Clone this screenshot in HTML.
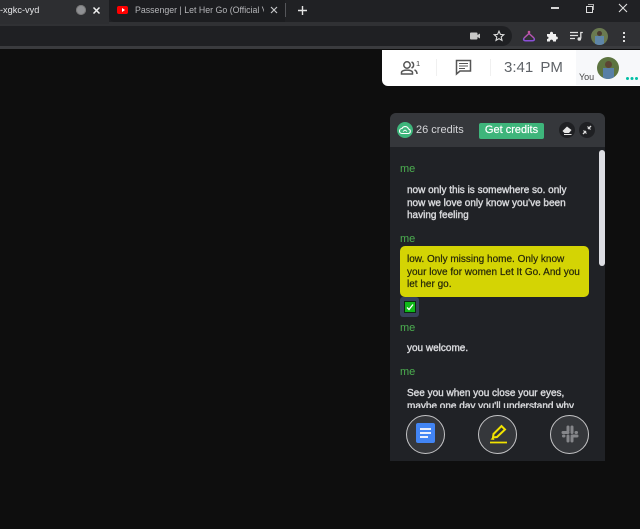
<!DOCTYPE html>
<html><head><meta charset="utf-8">
<style>
html,body{margin:0;padding:0;background:#0e0e0e;}
body{width:640px;height:529px;position:relative;overflow:hidden;font-family:"Liberation Sans",sans-serif;}
#w{position:absolute;left:0;top:0;width:640px;height:529px;filter:blur(.3px);overflow:hidden}
.a{position:absolute;}
.t{position:absolute;white-space:nowrap;}
.msg{position:absolute;left:407px;font-size:10px;line-height:12.600px;color:#d8d9dc;white-space:nowrap;-webkit-text-stroke:.4px #d8d9dc;}
.me{position:absolute;left:400px;font-size:11px;color:#4caf50;line-height:12px;}
.circ{position:absolute;width:37px;height:37px;border:1px solid #c4c4c6;border-radius:50%;background:#35373b;top:415px;}
</style></head><body><div id="w">
<div class="a" style="left:0;top:0;width:640px;height:24px;background:#202124"></div>
<div class="a" style="left:0;top:22px;width:640px;height:24px;background:#303134"></div>
<div class="a" style="left:0;top:0;width:109px;height:24px;background:#2d2e31"></div>
<div class="a" style="left:109px;top:0;width:176px;height:22px;background:#1c1d20;border-bottom-left-radius:6px"></div>
<div class="a" style="left:0;top:46px;width:640px;height:3px;background:#3a3b3e"></div>
<div class="a" style="left:0;top:26px;width:512px;height:20px;background:#1f2023;border-radius:0 10px 10px 0"></div>
<div class="t" style="left:0;top:4px;font-size:9.200px;line-height:12px;color:#e3e4e6">-xgkc-vyd</div>
<div class="a" style="left:75.500px;top:5px;width:10px;height:10px;border-radius:50%;background:#8f9093;box-shadow:inset 0 0 0 1px #777"></div>
<svg class="a" style="left:92px;top:6px" width="9" height="9"><path d="M1.500 1.500L7.500 7.500M7.500 1.500L1.500 7.500" stroke="#f0f0f0" stroke-width="1.500"/></svg>
<div class="a" style="left:117px;top:6px;width:11px;height:8px;background:#f00;border-radius:2px"></div>
<div class="a" style="left:121.500px;top:8px;width:0;height:0;border-left:3px solid #fff;border-top:2px solid transparent;border-bottom:2px solid transparent"></div>
<div class="t" style="left:135px;top:4px;width:129px;overflow:hidden;font-size:8.800px;line-height:12px;color:#b4b5b8">Passenger | Let Her Go (Official V</div>
<svg class="a" style="left:270px;top:6px" width="8" height="8"><path d="M1 1L7 7M7 1L1 7" stroke="#c4c5c7" stroke-width="1.200"/></svg>
<div class="a" style="left:285px;top:3px;width:1px;height:14px;background:#55565a"></div>
<svg class="a" style="left:297px;top:5px" width="11" height="11"><path d="M5.500 1V10M1 5.500H10" stroke="#e4e4e4" stroke-width="1.400"/></svg>
<div class="a" style="left:551px;top:7px;width:8px;height:1.500px;background:#d6d6d6"></div>
<div class="a" style="left:586px;top:6px;width:5px;height:5px;border:1px solid #ddd"></div>
<div class="a" style="left:588px;top:4px;width:5px;height:5px;border:1px solid #aaa;border-left:0;border-bottom:0"></div>
<svg class="a" style="left:618px;top:3px" width="10" height="10"><path d="M1 1L9 9M9 1L1 9" stroke="#e0e0e0" stroke-width="1.100"/></svg>
<svg class="a" style="left:469px;top:31px" width="12" height="10"><rect x="1" y="1.500" width="7.500" height="7" rx="1" fill="#c8c8c8"/><path d="M8.500 4L11 2.500V7.500L8.500 6Z" fill="#c8c8c8"/></svg>
<svg class="a" style="left:493px;top:30px" width="12" height="12"><path d="M6 1.200L7.400 4.400L10.800 4.700L8.200 7L9 10.400L6 8.600L3 10.400L3.800 7L1.200 4.700L4.600 4.400Z" fill="none" stroke="#dcdcdc" stroke-width="1.100"/></svg>
<svg class="a" style="left:522px;top:29px" width="14" height="14"><circle cx="7" cy="3" r="1.300" fill="#c9559f"/><path d="M2 9L7 4.500L12 9" fill="none" stroke="#b555b0" stroke-width="1.500"/><path d="M2 9C1 11.500 2.500 11.800 4 11.800H10C11.500 11.800 13 11.500 12 9" fill="none" stroke="#8a50d8" stroke-width="1.500"/></svg>
<svg class="a" style="left:546px;top:30px" width="12" height="12"><path d="M1 4H4C3.500 1 7.500 1 7 4H10V6.500C12.500 6 12.500 10 10 9.500V11.500H7C7.500 9 3.500 9 4 11.500H1V9C3 9 3 6.500 1 6.500Z" fill="#f0f0f0"/></svg>
<svg class="a" style="left:570px;top:31px" width="13" height="10"><path d="M0 1.500H8M0 4.500H8M0 7.500H5" stroke="#e0e0e0" stroke-width="1.200"/><path d="M10.800 7.500V1.500H12.800" fill="none" stroke="#e0e0e0" stroke-width="1.300"/><circle cx="9.300" cy="8" r="1.800" fill="#e0e0e0"/></svg>
<div class="a" style="left:591px;top:28px;width:17px;height:17px;border-radius:50%;background:#6a7a50;overflow:hidden"><div class="a" style="left:6px;top:3px;width:5px;height:5px;border-radius:50%;background:#4a3a30"></div><div class="a" style="left:4px;top:8px;width:9px;height:9px;background:#5f86a8"></div></div>
<div class="a" style="left:623px;top:32px;width:2px;height:2px;background:#ddd;box-shadow:0 4px 0 #ddd,0 8px 0 #ddd"></div>

<div class="a" style="left:382px;top:50px;width:258px;height:35.500px;background:#fff;border-bottom-left-radius:6px"></div>
<div class="a" style="left:576px;top:50px;width:64px;height:35px;background:#f7f8fa"></div>
<svg class="a" style="left:400px;top:60px" width="18" height="16"><circle cx="7" cy="5" r="3.200" fill="none" stroke="#555" stroke-width="1.500"/><path d="M1.500 14V12.500C1.500 9.300 12.500 9.300 12.500 12.500V14Z" fill="none" stroke="#555" stroke-width="1.500"/><path d="M11.500 2A3.200 3.200 0 0 1 11.500 8M14.500 9.800C16 10.500 17 12 17 14" fill="none" stroke="#555" stroke-width="1.500"/></svg>
<div class="t" style="left:416px;top:60px;font-size:7.500px;line-height:8px;color:#444">1</div>
<div class="a" style="left:436px;top:59px;width:1px;height:17px;background:#f0f0f0"></div>
<svg class="a" style="left:455px;top:59px" width="17" height="17"><path d="M1.500 1.500H15.500V12H5L1.500 15Z" fill="none" stroke="#555" stroke-width="1.500"/><path d="M4 4.500H13M4 7H13M4 9.500H10" stroke="#555" stroke-width="1.100"/></svg>
<div class="a" style="left:490px;top:59px;width:1px;height:17px;background:#f0f0f0"></div>
<div class="t" style="left:504px;top:59px;font-size:15px;line-height:18px;color:#5f6368;word-spacing:3px">3:41 PM</div>
<div class="t" style="left:579px;top:72px;font-size:9px;line-height:11px;color:#444">You</div>
<div class="a" style="left:597px;top:57px;width:22px;height:22px;border-radius:50%;background:#5d7440;overflow:hidden"><div class="a" style="left:8px;top:4px;width:7px;height:7px;border-radius:50%;background:#5c4433"></div><div class="a" style="left:6px;top:11px;width:11px;height:11px;background:#587fa6"></div></div>
<div class="a" style="left:626px;top:76.500px;width:3px;height:3px;border-radius:50%;background:#00bfa5;box-shadow:4.500px 0 0 #00bfa5,9px 0 0 #00bfa5"></div>

<div class="a" style="left:390px;top:113px;width:215px;height:348px;background:#202226;border-radius:6px 6px 0 0"></div>
<div class="a" style="left:390px;top:113px;width:215px;height:34px;background:#35373b;border-radius:6px 6px 0 0"></div>
<div class="a" style="left:397px;top:122px;width:16px;height:16px;border-radius:50%;background:#3eb57b"></div>
<svg class="a" style="left:399px;top:125px" width="12" height="10"><path d="M3 8.500A2.500 2.500 0 0 1 3 3.500A3.500 3.500 0 0 1 9.500 4A2.300 2.300 0 0 1 9.500 8.500Z" fill="none" stroke="#fff" stroke-width="1.100"/><path d="M4 6.500L6 5L8 6.500" fill="none" stroke="#fff" stroke-width=".8"/></svg>
<div class="t" style="left:416px;top:124px;font-size:11px;line-height:13px;color:#d4d5d8">26 credits</div>
<div class="a" style="left:479px;top:122.500px;width:65px;height:16px;background:#3eb57b;border-radius:2px"></div>
<div class="t" style="left:479px;top:123px;width:65px;text-align:center;font-size:11px;line-height:15px;color:#fff;-webkit-text-stroke:.2px #fff">Get credits</div>
<div class="a" style="left:559px;top:122px;width:16px;height:16px;border-radius:50%;background:#1f2023"></div>
<svg class="a" style="left:561px;top:124px" width="12" height="12"><path d="M1.500 7L6 2.500L10.500 6L8 9H3.500Z" fill="#e6e6e6"/><path d="M3 10.500H10.500" stroke="#e6e6e6"/></svg>
<div class="a" style="left:579px;top:122px;width:16px;height:16px;border-radius:50%;background:#1f2023"></div>
<svg class="a" style="left:581px;top:124px" width="12" height="12"><path d="M2 10L5 7M10 2L7 5" stroke="#ddd" stroke-width="1.400"/><path d="M6.500 2.500L9.500 5.500M2.500 6.500L5.500 9.500" stroke="#ddd" stroke-width="1.200"/></svg>

<div class="a" style="left:599px;top:150px;width:6px;height:116px;background:#dcdde2;border-radius:3px"></div>

<div class="me" style="top:163px">me</div>
<div class="msg" style="top:185px">now only this is somewhere so. only<br>now we love only know you've been<br>having feeling</div>
<div class="me" style="top:233px">me</div>
<div class="a" style="left:400px;top:246px;width:189px;height:51px;background:#d4d404;border-radius:5px"></div>
<div class="msg" style="top:254px;color:#25260a;-webkit-text-stroke:.2px #25260a">low. Only missing home. Only know<br>your love for women Let It Go. And you<br>let her go.</div>
<div class="a" style="left:400px;top:297px;width:19px;height:20px;background:#38415a;border-radius:3px"></div>
<div class="a" style="left:405px;top:302px;width:10px;height:10px;background:#10b81a;outline:1px solid #0a2a10"></div>
<svg class="a" style="left:405px;top:302px" width="10" height="10"><path d="M2 5.500L4 7.500L8 2.500" fill="none" stroke="#fff" stroke-width="1.300"/></svg>
<div class="me" style="top:322px">me</div>
<div class="msg" style="top:343px">you welcome.</div>
<div class="me" style="top:366px">me</div>
<div class="msg" style="top:388px;height:20px;overflow:hidden">See you when you close your eyes,<br>maybe one day you'll understand why</div>

<div class="circ" style="left:406px"></div>
<div class="a" style="left:416px;top:423px;width:19px;height:20px;background:#4285f4;border-radius:2px"></div>
<div class="a" style="left:420px;top:428px;width:11px;height:2px;background:#e8eefc;box-shadow:0 4px 0 #e8eefc"></div>
<div class="a" style="left:420px;top:436px;width:8px;height:2px;background:#e8eefc"></div>
<div class="circ" style="left:478px"></div>
<svg class="a" style="left:487px;top:421px" width="22" height="24"><path d="M6.500 13L14.500 5L18 8.500L10 16L6 16.500Z" fill="none" stroke="#f2e300" stroke-width="2"/><path d="M6 16L3.500 18.500L7.500 19Z" fill="#f2e300"/><path d="M3 21.500H20" stroke="#f2e300" stroke-width="1.700"/></svg>
<div class="circ" style="left:550px"></div>
<svg class="a" style="left:560px;top:424px" width="20" height="20" fill="none" stroke="#85868a" stroke-width="3" stroke-linecap="round"><path d="M8 3V6.500M3 8.500H8"/><path d="M12 3V8.500M16.500 8.500H16"/><path d="M12 17V13.500M17 12H12"/><path d="M8 17V12M3.500 12H4"/></svg>
</div></body></html>
